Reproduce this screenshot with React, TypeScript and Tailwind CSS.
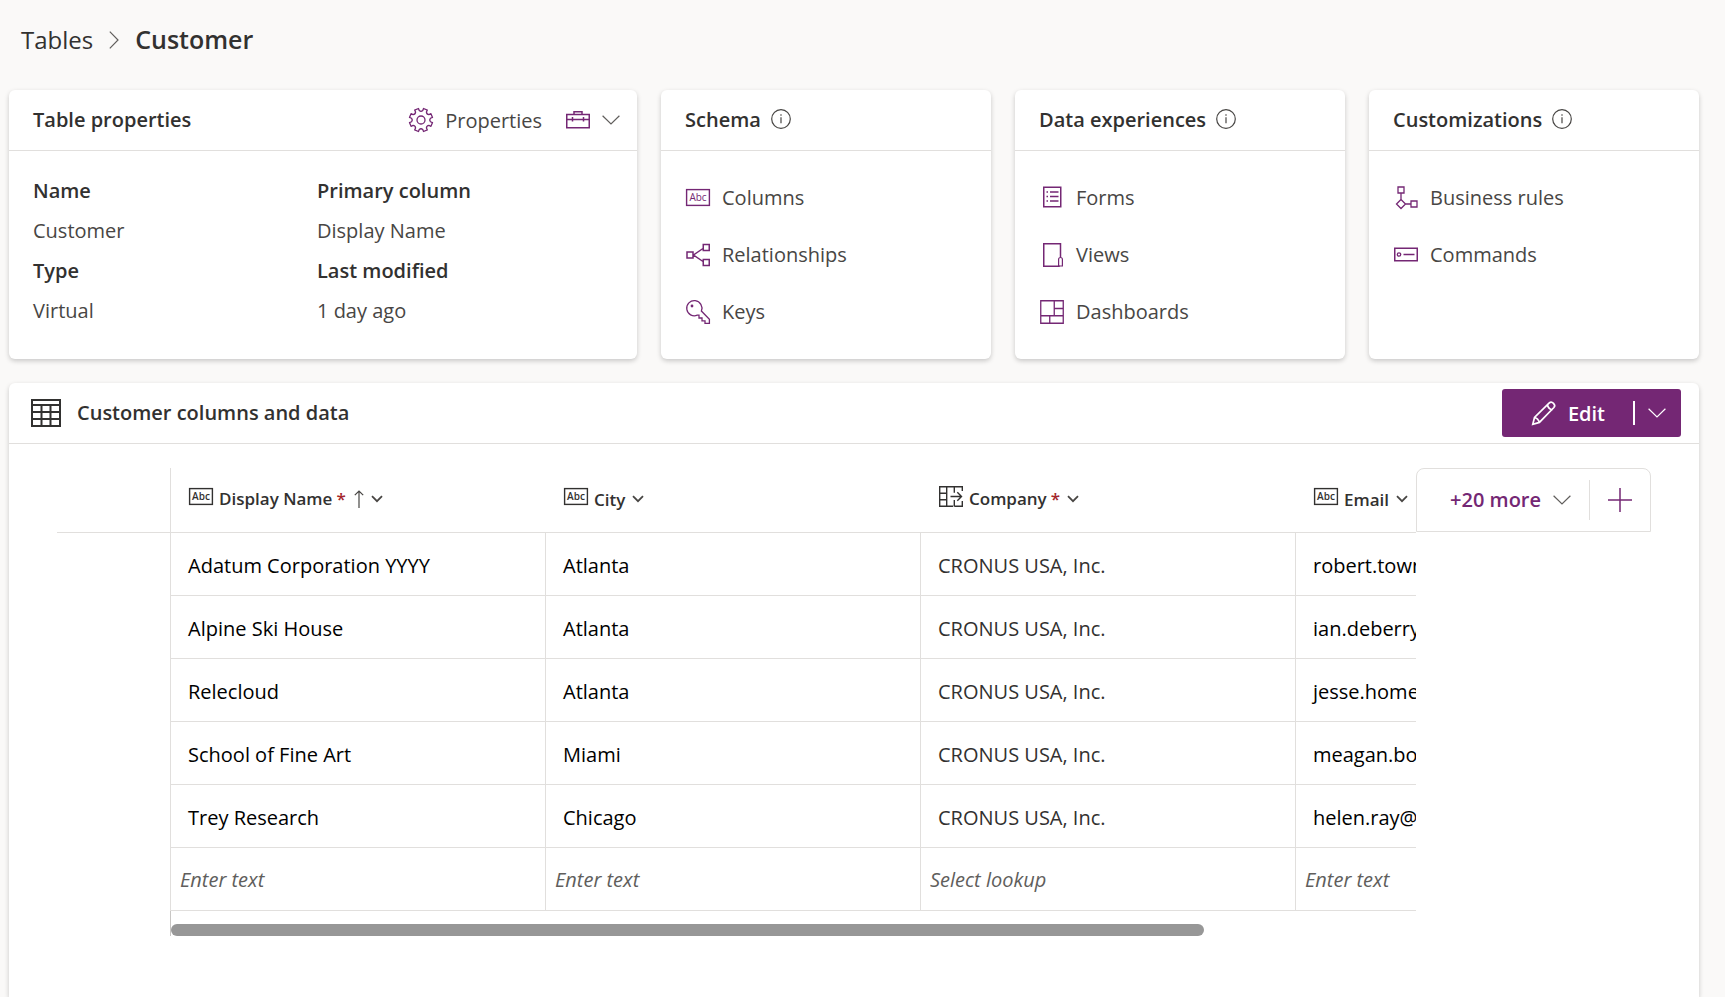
import type { ReactNode } from 'react';

const gearPath = () => {
	const point = (deg: number, radius: number) => {
		const rad = (deg * Math.PI) / 180;
		return `${(12 + radius * Math.sin(rad)).toFixed(2)} ${(12 - radius * Math.cos(rad)).toFixed(2)}`;
	};
	let d = '';
	for (let i = 0; i < 8; i++) {
		const a = i * 45 + 22.5;
		d += `${i === 0 ? 'M' : 'L'}${point(a - 10, 11.8)} L${point(a + 10, 11.8)} L${point(a + 12, 9.6)} Q${point(a + 22.5, 8)} ${point(a + 33, 9.6)} `;
	}
	return d + 'Z';
};

const Icon = ({ children, className = 'text-[#742774]' }: { children: ReactNode; className?: string }) => (
	<svg
		viewBox="0 0 24 24"
		fill="none"
		stroke="currentColor"
		strokeWidth="1.5"
		aria-hidden="true"
		className={`h-6 w-6 shrink-0 overflow-visible ${className}`}>
		{children}
	</svg>
);

const GearIcon = () => (
	<Icon>
		<path d={gearPath()} strokeWidth="1.3" strokeLinejoin="round" />
		<circle cx="12" cy="12" r="4" strokeWidth="1.3" />
	</Icon>
);

const ToolboxIcon = () => (
	<Icon>
		<path d="M.75 6.5h22.5v13.25H.75zM8 6V3.75h8V6M.75 11.5h22.5M6.5 9v4.5M17.5 9v4.5" />
	</Icon>
);

const AbcIcon = ({ className }: { className?: string }) => (
	<Icon className={className}>
		<rect x=".6" y="3.6" width="22.8" height="15.8" strokeWidth="1.4" />
		<text
			x="12"
			y="15"
			textAnchor="middle"
			stroke="none"
			fill="currentColor"
			className="font-['Open_Sans',sans-serif] text-[10px]">
			Abc
		</text>
	</Icon>
);

const RelationshipIcon = () => (
	<Icon>
		<path d="M1 9h6v6H1zM17.25 1.5h6v6h-6zM17.25 16.5h6v6h-6zM17 5.5 7.5 12l9.5 6.5" />
	</Icon>
);

const KeyIcon = () => (
	<Icon>
		<path d="M15.4 11A7.6 7.6 0 1 0 11.3 15.2L13 15.2v2.8h3v2.8h3v2.6h4.4v-4.2z" strokeWidth="1.3" />
		<circle cx="6" cy="6" r="1.4" fill="currentColor" stroke="none" />
	</Icon>
);

const FormIcon = () => (
	<Icon>
		<path d="M3.75 1.25h17v19.5h-17z" />
		<path d="M6.5 6h1.5M10 6h8.5M6.5 10.5h1.5M10 10.5h8.5M6.5 15h1.5M10 15h8.5" strokeWidth="1.5" />
	</Icon>
);

const ViewIcon = () => (
	<Icon>
		<path d="M20.5 14V.75H3.75v22.5h16" />
		<path d="M18.6 23v-6.5q0-2 1.9-2t1.9 2V23z" strokeWidth="1.2" />
	</Icon>
);

const DashboardIcon = () => (
	<Icon>
		<path d="M.75.75h22.5v22.5H.75zM14.25.75v15M14.25 8.5h9M.75 15.75h22.5M9.75 15.75v7.5" strokeWidth="1.3" />
	</Icon>
);

const RulesIcon = () => (
	<Icon>
		<path d="M4 1h6v6H4zM17 15h6v6h-6zM7 7v6.5M11.5 18H17M7 13.5 11.5 18 7 22.5 2.5 18z" strokeWidth="1.3" />
	</Icon>
);

const CommandIcon = () => (
	<Icon>
		<path d="M.75 5.25h22.5v12.5H.75zM9.5 11.5h11" />
		<circle cx="5" cy="11.5" r="1.7" strokeWidth="1.3" />
	</Icon>
);

const LookupIcon = () => (
	<Icon className="text-[#323130]">
		<path
			d="M23.3 6V1.7H.7v19.6h13.5M.7 8.3h7M.7 14.8h7M7.7 1.7v19.6M15.3 1.7v6M15.3 15v6.3M23.3 16v5.3h-8M11.5 11.5H22M18.3 7.3l4.2 4.2-4.2 4.2"
			strokeWidth="1.4"
		/>
	</Icon>
);

const InfoIcon = () => (
	<svg viewBox="0 0 20 20" fill="none" stroke="#484644" strokeWidth="1.2" aria-hidden="true" className="h-5 w-5">
		<circle cx="10" cy="10" r="9.3" />
		<path d="M10 8.2v6M10 5.2v1.6" />
	</svg>
);

const ChevronDown = ({ className = 'text-[#605e5c]' }: { className?: string }) => (
	<svg viewBox="0 0 18 10" fill="none" stroke="currentColor" strokeWidth="1.2" aria-hidden="true" className={`h-[10px] w-[18px] ${className}`}>
		<path d="m.6.8 8.4 8.2L17.4.8" />
	</svg>
);

const SmallChevron = () => (
	<svg viewBox="0 0 12 8" fill="none" stroke="#484644" strokeWidth="1.8" aria-hidden="true" className="h-2 w-3">
		<path d="m1 1.2 5 5 5-5" />
	</svg>
);

const Card = ({ title, info, actions, children }: { title: string; info?: boolean; actions?: ReactNode; children: ReactNode }) => (
	<section className="min-h-[269px] rounded-md bg-white shadow-[0_2px_5px_rgba(0,0,0,0.2)]">
		<div className="flex h-[61px] items-center border-b border-[#e1dfdd] pr-[17px] pl-6">
			<h2 className="text-xl font-semibold">{title}</h2>
			{info && (
				<button type="button" aria-label={`About ${title}`} className="mb-[3px] ml-[10px]">
					<InfoIcon />
				</button>
			)}
			{actions}
		</div>
		{children}
	</section>
);

const LinkList = ({ items }: { items: { label: string; icon: ReactNode }[] }) => (
	<ul className="flex flex-col gap-[29px] pt-[33px] pl-[25px]">
		{items.map((item) => (
			<li key={item.label}>
				<a href="#" className="flex h-7 items-center gap-3 text-xl text-[#484644]">
					{item.icon}
					{item.label}
				</a>
			</li>
		))}
	</ul>
);

const properties = [
	['Name', 'Customer'],
	['Primary column', 'Display Name'],
	['Type', 'Virtual'],
	['Last modified', '1 day ago'],
];

const columns = [
	{ name: 'Display Name', required: true, sorted: true, placeholder: 'Enter text' },
	{ name: 'City', placeholder: 'Enter text' },
	{ name: 'Company', required: true, lookup: true, placeholder: 'Select lookup' },
	{ name: 'Email', placeholder: 'Enter text' },
];

const rows = [
	['Adatum Corporation YYYY', 'Atlanta', 'CRONUS USA, Inc.', 'robert.townes@contoso.com'],
	['Alpine Ski House', 'Atlanta', 'CRONUS USA, Inc.', 'ian.deberry@contoso.com'],
	['Relecloud', 'Atlanta', 'CRONUS USA, Inc.', 'jesse.homer@contoso.com'],
	['School of Fine Art', 'Miami', 'CRONUS USA, Inc.', 'meagan.bond@contoso.com'],
	['Trey Research', 'Chicago', 'CRONUS USA, Inc.', 'helen.ray@contoso.com'],
];

const DataTable = () => (
	<div className="min-w-0 flex-1 overflow-hidden">
		<table className="w-[1614px] table-fixed border-separate border-spacing-0 text-left text-xl">
			<colgroup>
				<col className="w-[114px]" />
				<col className="w-[375px]" />
				<col className="w-[375px]" />
				<col className="w-[375px]" />
				<col className="w-[375px]" />
			</colgroup>
			<thead>
				<tr className="h-[65px]">
					<td className="border-r border-b border-[#e1dfdd]" />
					{columns.map((col) => (
						<th key={col.name} scope="col" className="border-b border-[#e1dfdd] px-[18px] py-0 text-[17px] font-semibold">
							<button type="button" className={`flex h-7 items-center ${col.required ? 'mb-[3px]' : ''}`}>
								<span className={col.required ? 'mb-1' : 'mb-[7px]'}>
									{col.lookup ? <LookupIcon /> : <AbcIcon className="text-[#323130]" />}
								</span>
								<span className="ml-[6px]">{col.name}</span>
								{col.required && <span className="ml-1 text-[#a4262c]">*</span>}
								{col.sorted && (
									<svg viewBox="0 0 10 18" fill="none" stroke="#484644" strokeWidth="1.2" aria-hidden="true" className="ml-2 h-[18px] w-[10px]">
										<path d="M5 18V1M.8 5.2 5 1l4.2 4.2" />
									</svg>
								)}
								<span className={col.required ? 'ml-[7px]' : 'mb-[3px] ml-[7px]'}>
									<SmallChevron />
								</span>
							</button>
						</th>
					))}
				</tr>
			</thead>
			<tbody>
				{rows.map((row) => (
					<tr key={row[0]} className="h-[63px]">
						<td className="border-r border-[#e1dfdd]" />
						{row.map((cell, i) => (
							<td
								key={i}
								className={`border-r border-b border-[#e1dfdd] px-[17px] pt-[3px] pb-0 ${i === 2 ? 'text-[#323130]' : 'text-black'}`}>
								{cell}
							</td>
						))}
					</tr>
				))}
				<tr className="h-[63px]">
					<td className="border-r border-[#e1dfdd]" />
					{columns.map((col) => (
						<td key={col.name} className="border-r border-b border-[#e1dfdd] p-0">
							<input
								type="text"
								aria-label={`New row, ${col.name}`}
								placeholder={col.placeholder}
								className="h-[62px] w-full px-[9px] italic placeholder:text-[#605e5c]"
							/>
						</td>
					))}
				</tr>
			</tbody>
		</table>
		<div className="ml-[113px] border-l border-[#c8c6c4] pt-[13px]">
			<div className="h-3 w-[83%] rounded-full bg-[#979797]" />
		</div>
	</div>
);

const App = () => {
	return (
		<div className="flex min-h-screen flex-col bg-[#faf9f8] pr-[26px] pl-[9px] font-['Open_Sans','Noto_Sans',sans-serif] text-[#323130]">
			<nav aria-label="Breadcrumb" className="flex h-[90px] items-center gap-4 pb-[10px] pl-3 text-2xl">
				<a href="#">Tables</a>
				<svg viewBox="0 0 10 18" fill="none" stroke="#605e5c" strokeWidth="1.2" aria-hidden="true" className="h-[18px] w-[10px]">
					<path d="m.8.6 8.2 8.4-8.2 8.4" />
				</svg>
				<h1 className="text-[25px] font-semibold">Customer</h1>
			</nav>

			<div className="grid grid-cols-[1fr_330px_330px_330px] gap-6">
				<Card
					title="Table properties"
					actions={
						<div className="ml-auto flex items-center">
							<button type="button" className="flex items-center gap-3 text-xl text-[#484644]">
								<GearIcon />
								<span className="pt-[2px]">Properties</span>
							</button>
							<button type="button" aria-label="Table tools" className="ml-6 flex items-center gap-3">
								<ToolboxIcon />
								<ChevronDown />
							</button>
						</div>
					}>
					<dl className="grid grid-cols-[284px_1fr] px-6 pt-5 text-xl leading-10">
						{properties.map(([label, value]) => (
							<div key={label}>
								<dt className="font-semibold">{label}</dt>
								<dd className="text-[#484644]">{value}</dd>
							</div>
						))}
					</dl>
				</Card>
				<Card title="Schema" info>
					<LinkList
						items={[
							{ label: 'Columns', icon: <AbcIcon /> },
							{ label: 'Relationships', icon: <RelationshipIcon /> },
							{ label: 'Keys', icon: <KeyIcon /> },
						]}
					/>
				</Card>
				<Card title="Data experiences" info>
					<LinkList
						items={[
							{ label: 'Forms', icon: <FormIcon /> },
							{ label: 'Views', icon: <ViewIcon /> },
							{ label: 'Dashboards', icon: <DashboardIcon /> },
						]}
					/>
				</Card>
				<Card title="Customizations" info>
					<LinkList
						items={[
							{ label: 'Business rules', icon: <RulesIcon /> },
							{ label: 'Commands', icon: <CommandIcon /> },
						]}
					/>
				</Card>
			</div>

			<section className="mt-6 flex-1 rounded-t-md bg-white shadow-[0_2px_5px_rgba(0,0,0,0.2)]">
				<div className="flex h-[61px] items-center border-b border-[#e1dfdd] pr-[18px] pl-[22px]">
					<svg viewBox="0 0 30 28" fill="none" stroke="#323130" strokeWidth="2" aria-hidden="true" className="h-7 w-[30px]">
						<path d="M1 1h28v26H1zM1 6h28M1 13h28M1 20h28M10.5 6v21M19.5 6v21" />
					</svg>
					<h2 className="ml-4 text-xl font-semibold">Customer columns and data</h2>
					<div className="ml-auto flex h-12 items-center rounded-[3px] bg-[#742774] text-white">
						<button type="button" className="flex h-12 items-center gap-3 pr-7 pl-[30px] text-xl font-bold">
							<Icon className="text-white">
								<path
									d="M.8 23.2l1.7-6.7L17.3 1.9q2-1.8 4.2.4t.4 4.2L7.4 21.4zM2.5 16.5q3.6.8 4.9 4.9M15.5 3.8q.6 4.2 5 5"
									strokeWidth="1.7"
								/>
							</Icon>
							<span className="pt-[2px] font-semibold">Edit</span>
						</button>
						<span className="h-6 w-[2px] bg-white" />
						<button type="button" aria-label="More edit options" className="flex h-12 items-center pr-[15px] pl-[13px]">
							<ChevronDown className="text-white" />
						</button>
					</div>
				</div>

				<div className="flex items-start pt-6 pr-12 pl-12">
					<DataTable />
					<div className="flex h-16 w-[235px] shrink-0 items-center rounded-t-lg border border-[#e1dfdd]">
						<button type="button" className="flex h-full flex-1 items-center justify-end gap-3 pr-[18px] text-xl font-semibold text-[#742774]">
							+20 more
							<ChevronDown />
						</button>
						<button
							type="button"
							aria-label="New column"
							className="flex h-10 w-[61px] items-center justify-center border-l border-[#e1dfdd]">
							<Icon>
								<path d="M12 0v24M0 12h24" />
							</Icon>
						</button>
					</div>
				</div>
			</section>
		</div>
	);
};

export default App;
